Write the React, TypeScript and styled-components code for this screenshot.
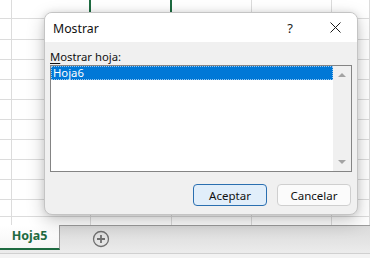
import React from 'react';
import styled, { createGlobalStyle } from 'styled-components';

const GlobalStyle = createGlobalStyle`
	html, body {
		margin: 0;
		padding: 0;
		background: #ffffff;
	}
	body {
		font-family: "Noto Sans", "Liberation Sans", sans-serif;
	}
`;

const COLUMNS = 6;
const ROWS = 12;

const Page = styled.div`
	position: relative;
	width: 370px;
	height: 258px;
	display: flex;
	flex-direction: column;
	overflow: hidden;
	background: #ffffff;
`;

const Sheet = styled.div`
	flex: 1;
	display: grid;
	grid-template-columns: 12px 79px 81px 80px 80px 1fr;
	grid-template-rows: 19px 21px repeat(8, 20px) 17px 1fr;
`;

const Cell = styled.div<{ $last: boolean; $selected: boolean }>`
	position: relative;
	box-sizing: border-box;
	border-right: 1px solid #dcdcdc;
	border-bottom: ${({ $last }) => ($last ? 'none' : '1px solid #dcdcdc')};

	${({ $selected }) =>
		$selected &&
		`
		&::after {
			content: '';
			position: absolute;
			top: 0;
			left: -2px;
			right: -1px;
			bottom: -1px;
			border: 2px solid #1e6b41;
			border-top: none;
		}
	`}
`;

const TabBar = styled.div`
	height: 28px;
	display: flex;
	align-items: stretch;
	background: linear-gradient(180deg, #dadada 0%, #e6e6e6 70%, #ececec 100%);
`;

const Tab = styled.div`
	width: 60px;
	box-sizing: border-box;
	display: flex;
	align-items: center;
	justify-content: center;
	padding-bottom: 2px;
	background: linear-gradient(180deg, #ffffff 0%, #f6f6f6 100%);
	border-right: 1px solid #9c9c9c;
	border-bottom: 2px solid #1e6b41;
	margin-bottom: 3px;
	font-size: 12.5px;
	font-weight: 700;
	color: #1e6b41;
`;

const TabRest = styled.div`
	flex: 1;
	display: flex;
	align-items: center;
	padding-left: 32px;
	border-top: 1px solid #9c9c9c;
	padding-bottom: 2px;
`;

const StatusStrip = styled.div`
	height: 4px;
	background: #f3f3f3;
	border-top: 1px solid #d0d0d0;
`;

const Dialog = styled.div`
	position: absolute;
	left: 44px;
	top: 12px;
	width: 314px;
	height: 203px;
	box-sizing: border-box;
	display: flex;
	flex-direction: column;
	border-radius: 8px;
	border: 1px solid #c4c4c4;
	background: #f0f0f0;
	box-shadow: 0 6px 18px rgba(0, 0, 0, 0.22), 0 0 6px rgba(0, 0, 0, 0.1);
	overflow: hidden;
	font-size: 11.3px;
	color: #111111;
`;

const TitleBar = styled.div`
	height: 30px;
	display: flex;
	align-items: center;
	background: #ffffff;
	padding-left: 8px;
	font-size: 12.3px;
`;

const Title = styled.div`
	flex: 1;
	padding-top: 1px;
`;

const TitleButton = styled.div<{ $width: number }>`
	width: ${({ $width }) => $width}px;
	display: flex;
	align-items: center;
	justify-content: center;
	font-size: 13px;
	color: #1a1a1a;
`;

const Body = styled.div`
	flex: 1;
	display: flex;
	flex-direction: column;
	padding: 7px 5px 8px 5px;
`;

const Label = styled.div`
	height: 15px;
	line-height: 15px;
	margin-bottom: 1px;

	u {
		text-underline-offset: 2px;
	}
`;

const ListBox = styled.div`
	height: 107px;
	box-sizing: border-box;
	display: flex;
	border: 1px solid #848484;
	background: #ffffff;
`;

const ListArea = styled.div`
	flex: 1;
`;

const ListItem = styled.div<{ $selected: boolean }>`
	height: 14px;
	line-height: 13px;
	padding-left: 2px;
	box-sizing: border-box;
	background: ${({ $selected }) => ($selected ? '#0078d7' : 'transparent')};
	color: ${({ $selected }) => ($selected ? '#ffffff' : '#1a1a1a')};
	outline: ${({ $selected }) => ($selected ? '1px dotted #9cc8ee' : 'none')};
	outline-offset: -1px;
`;

const ScrollBar = styled.div`
	width: 18px;
	display: flex;
	flex-direction: column;
	justify-content: space-between;
	align-items: center;
	background: #f0f0f0;
	padding: 7px 0 7px 0;
`;

const Arrow = styled.div<{ $down: boolean }>`
	width: 0;
	height: 0;
	border-left: 4px solid transparent;
	border-right: 4px solid transparent;
	${({ $down }) => ($down ? 'border-top: 4px solid #a3a3a3;' : 'border-bottom: 4px solid #a3a3a3;')}
`;

const ButtonRow = styled.div`
	display: flex;
	justify-content: flex-end;
	gap: 10px;
	margin-top: 12px;
	padding-right: 1px;
`;

const Button = styled.button<{ $primary: boolean }>`
	width: 74px;
	height: 22px;
	box-sizing: border-box;
	border-radius: 4px;
	border: 1px solid ${({ $primary }) => ($primary ? '#2a6fb0' : '#cfcfcf')};
	background: ${({ $primary }) => ($primary ? '#e1eefa' : '#fbfbfb')};
	font-family: inherit;
	font-size: 11.5px;
	color: #111111;
	padding: 0;
`;

const PlusIcon = () => (
	<svg width="18" height="18" viewBox="0 0 18 18">
		<circle cx="9" cy="9" r="7.5" fill="none" stroke="#6f6f6f" strokeWidth="1.3" />
		<path d="M9 5v8M5 9h8" stroke="#6f6f6f" strokeWidth="1.8" />
	</svg>
);

const CloseIcon = () => (
	<svg width="11" height="11" viewBox="0 0 11 11">
		<path d="M0.5 0.5l10 10M10.5 0.5l-10 10" stroke="#1a1a1a" strokeWidth="1" />
	</svg>
);

const App = () => {
	const cells = [];
	for (let r = 0; r < ROWS; r++) {
		for (let c = 0; c < COLUMNS; c++) {
			cells.push(
				<Cell key={`${r}-${c}`} $last={r === ROWS - 1} $selected={r === 0 && c === 2} />
			);
		}
	}

	return (
		<Page>
			<GlobalStyle />
			<Sheet>{cells}</Sheet>
			<TabBar>
				<Tab>Hoja5</Tab>
				<TabRest>
					<PlusIcon />
				</TabRest>
			</TabBar>
			<StatusStrip />

			<Dialog>
				<TitleBar>
					<Title>Mostrar</Title>
					<TitleButton $width={46}>?</TitleButton>
					<TitleButton $width={44}>
						<CloseIcon />
					</TitleButton>
				</TitleBar>
				<Body>
					<Label>
						<u>M</u>ostrar hoja:
					</Label>
					<ListBox>
						<ListArea>
							<ListItem $selected>Hoja6</ListItem>
						</ListArea>
						<ScrollBar>
							<Arrow $down={false} />
							<Arrow $down />
						</ScrollBar>
					</ListBox>
					<ButtonRow>
						<Button $primary>Aceptar</Button>
						<Button $primary={false}>Cancelar</Button>
					</ButtonRow>
				</Body>
			</Dialog>
		</Page>
	);
};

export default App;
